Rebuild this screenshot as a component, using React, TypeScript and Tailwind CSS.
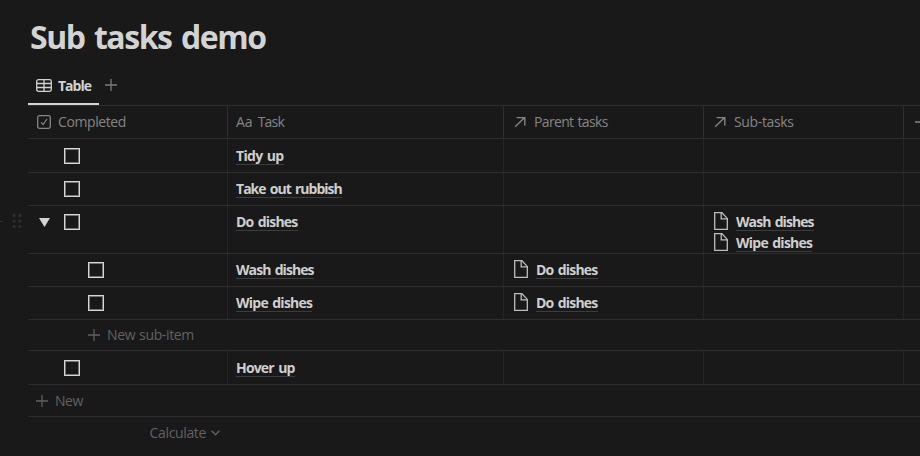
import type { ReactNode } from 'react';

type Row = {
  name: string;
  nameClass: string;
  height: string;
  pad: string;
  nested?: boolean;
  open?: boolean;
  parent?: string;
  subtasks?: { name: string; cls: string }[];
};

const rows: Row[] = [
  { name: 'Tidy up', nameClass: 'tracking-[-0.7px]', height: 'h-[34px]', pad: 'pt-[9px]' },
  { name: 'Take out rubbish', nameClass: 'tracking-[-0.98px]', height: 'h-[33px]', pad: 'pt-[8px]' },
  {
    name: 'Do dishes',
    nameClass: 'tracking-[-0.8px]',
    height: 'h-[48px]',
    pad: 'pt-[8px]',
    open: true,
    subtasks: [
      { name: 'Wash dishes', cls: 'tracking-[-0.93px]' },
      { name: 'Wipe dishes', cls: 'tracking-[-0.76px]' },
    ],
  },
  { name: 'Wash dishes', nameClass: 'tracking-[-0.93px]', height: 'h-[33px]', pad: 'pt-[8px]', nested: true, parent: 'Do dishes' },
  { name: 'Wipe dishes', nameClass: 'tracking-[-0.76px]', height: 'h-[33px]', pad: 'pt-[8px]', nested: true, parent: 'Do dishes' },
];

const lastRow: Row = { name: 'Hover up', nameClass: 'tracking-[-0.83px]', height: 'h-[34px]', pad: 'pt-[9px]' };

function Plus({ className = '' }: { className?: string }) {
  return (
    <svg width="12" height="12" viewBox="0 0 12 12" className={`shrink-0 ${className}`}>
      <path d="M6 0v12M0 6h12" stroke="currentColor" strokeWidth="1.3" fill="none" />
    </svg>
  );
}

function TableIcon() {
  return (
    <svg width="16" height="13" viewBox="0 0 16 13" className="shrink-0" fill="none" stroke="currentColor" strokeWidth="1.3">
      <rect x="0.7" y="0.7" width="14.6" height="11.6" rx="1.8" />
      <path d="M1 4.5h14M1 8.5h14M8 1v11" />
    </svg>
  );
}

function CheckIcon() {
  return (
    <svg width="14" height="14" viewBox="0 0 14 14" className="shrink-0" fill="none" stroke="currentColor" strokeWidth="1.3">
      <rect x="0.7" y="0.7" width="12.6" height="12.6" rx="1.8" />
      <path d="M4 7.4l2.1 2.2 3.9-5.6" />
    </svg>
  );
}

function ArrowIcon() {
  return (
    <svg width="12" height="12" viewBox="0 0 12 12" className="shrink-0" fill="none" stroke="currentColor" strokeWidth="1.4">
      <path d="M1.2 10.8L10.6 1.6M2.6 1.6h8.2v8" />
    </svg>
  );
}

function PageIcon() {
  return (
    <svg width="14" height="18" viewBox="0 0 14 18" className="-mt-0.5 shrink-0 text-[#bdbdbd]" fill="none" stroke="currentColor" strokeWidth="1.3">
      <path d="M0.7 0.7h7.2l5.4 5.7v10.9H0.7z" />
      <path d="M7.2 0.8v6h6" />
    </svg>
  );
}

function Title({ children, className = '' }: { children: ReactNode; className?: string }) {
  return (
    <span
      className={`block h-[17px] w-fit border-b border-[#3d3d3d] text-[14px] leading-[16px] font-bold [word-spacing:1.5px] whitespace-nowrap text-[#cfcfcf] ${className}`}
    >
      {children}
    </span>
  );
}

function Relation({ name, cls }: { name: string; cls: string }) {
  return (
    <div className="flex h-[21px] items-start">
      <PageIcon />
      <Title className={`ml-2 ${cls}`}>{name}</Title>
    </div>
  );
}

function TaskRow({ row }: { row: Row }) {
  const cell = `shrink-0 border-r border-[#252525] ${row.pad}`;
  return (
    <div className={`flex border-b border-[#2f2f2f] ${row.height}`}>
      <div className={`flex w-[200px] items-start ${cell} ${row.nested ? 'pl-[60px]' : row.open ? 'pl-[11px]' : 'pl-[36px]'}`}>
        {row.open && (
          <svg width="11" height="9" viewBox="0 0 11 9" className="mt-1 mr-[14px] shrink-0">
            <path d="M0 0h11L5.5 9z" fill="#d3d3d3" />
          </svg>
        )}
        <span className="flex h-4 w-4 shrink-0 border border-[#d6d6d6]">
          <span className="flex-1 border border-[#747474]" />
        </span>
      </div>
      <div className={`w-[276px] pl-2 ${cell}`}>
        <Title className={row.nameClass}>{row.name}</Title>
      </div>
      <div className={`w-[200px] pl-[10px] ${cell}`}>
        {row.parent && <Relation name={row.parent} cls="tracking-[-0.8px]" />}
      </div>
      <div className={`w-[200px] pl-[10px] ${cell}`}>
        {row.subtasks?.map((s) => <Relation key={s.name} name={s.name} cls={s.cls} />)}
      </div>
    </div>
  );
}

export default function App() {
  return (
    <div className="relative h-[456px] w-[920px] overflow-hidden bg-[#191919] pl-7 font-['Open_Sans','Noto_Sans',sans-serif] text-[14px]">
      {/* hover controls in the left gutter */}
      <div className="absolute top-[213px] left-0 flex h-4 items-center text-[#303030]">
        <span className="h-px w-[3px] bg-[#333]" />
        <svg width="10" height="16" viewBox="0 0 10 16" className="ml-[9px]" fill="currentColor">
          {[2.5, 8, 13.5].map((y) => (
            <g key={y}>
              <circle cx="2.2" cy={y} r="1.5" />
              <circle cx="7.8" cy={y} r="1.5" />
            </g>
          ))}
        </svg>
      </div>

      <h1 className="h-[70px] pt-[15px] pl-[2px] text-[32px] leading-[44px] font-bold tracking-[-1.45px] [word-spacing:2.5px] whitespace-nowrap text-[#d3d3d3]">
        Sub tasks demo
      </h1>

      <div className="flex h-9 w-[892px] border-b border-[#2f2f2f]">
        <div className="-mb-px flex h-[35px] w-[71px] items-start border-b-2 border-[#d3d3d3] pt-[9px] pl-2 text-[#d3d3d3]">
          <TableIcon />
          <span className="-mt-[3px] ml-[6px] leading-[20px] font-bold tracking-[-1px]">Table</span>
        </div>
        <Plus className="mt-[9px] ml-[6px] text-[#7b7b7b]" />
      </div>

      <div className="w-[892px]">
        <div className="flex h-[33px] border-b border-[#2f2f2f] text-[#858585]">
          <div className="flex w-[200px] shrink-0 items-center border-r border-[#2f2f2f] pl-[9px]">
            <CheckIcon />
            <span className="ml-[7px] pb-px tracking-[-0.4px]">Completed</span>
          </div>
          <div className="flex w-[276px] shrink-0 items-center border-r border-[#2f2f2f] pl-2">
            <span className="pb-px">Aa</span>
            <span className="ml-[5px] pb-px tracking-[-0.8px]">Task</span>
          </div>
          <div className="flex w-[200px] shrink-0 items-center border-r border-[#2f2f2f] pl-[10px]">
            <ArrowIcon />
            <span className="ml-2 pb-px tracking-[-0.65px] [word-spacing:1px]">Parent tasks</span>
          </div>
          <div className="flex w-[200px] shrink-0 items-center border-r border-[#2f2f2f] pl-[10px]">
            <ArrowIcon />
            <span className="ml-2 pb-px tracking-[-0.35px]">Sub-tasks</span>
          </div>
          <div className="flex items-center pl-[11px]">
            <Plus />
          </div>
        </div>

        {rows.map((row) => (
          <TaskRow key={row.name} row={row} />
        ))}
        <div className="flex h-[31px] items-center border-b border-[#2f2f2f] pl-[60px] text-[#616161]">
          <Plus />
          <span className="ml-[7px] pb-px tracking-[-0.35px] [word-spacing:0.6px]">New sub-item</span>
        </div>
        <TaskRow row={lastRow} />

        <div className="flex h-8 items-center border-b border-[#2f2f2f] pl-2 text-[#616161]">
          <Plus />
          <span className="ml-[7px] tracking-[-0.45px]">New</span>
        </div>
        <div className="flex h-8 w-[192px] items-center justify-end text-[#616161]">
          <span className="pb-px tracking-[-0.35px]">Calculate</span>
          <svg width="9" height="6" viewBox="0 0 9 6" className="ml-[5px]" fill="none" stroke="currentColor" strokeWidth="1.4">
            <path d="M0.6 0.8l3.9 3.9 3.9-3.9" />
          </svg>
        </div>
      </div>
    </div>
  );
}
